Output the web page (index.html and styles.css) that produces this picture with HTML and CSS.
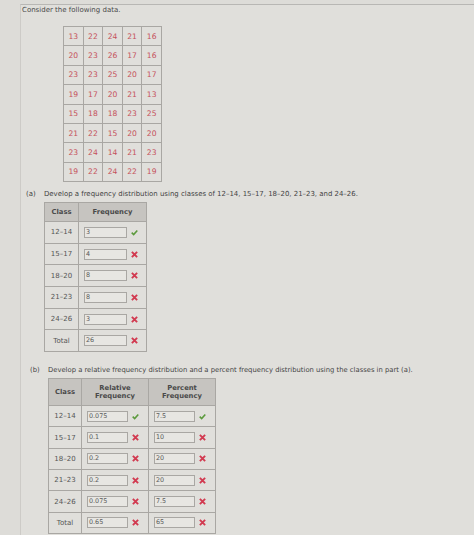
FILE: index.html
```html
<!DOCTYPE html>
<html>
<head>
<meta charset="utf-8">
<link rel="stylesheet" href="styles.css">
</head>
<body>
<div class="page">
  <p class="intro">Consider the following data.</p>
  <div class="data">
    <div>13</div><div>22</div><div>24</div><div>21</div><div>16</div>
    <div>20</div><div>23</div><div>26</div><div>17</div><div>16</div>
    <div>23</div><div>23</div><div>25</div><div>20</div><div>17</div>
    <div>19</div><div>17</div><div>20</div><div>21</div><div>13</div>
    <div>15</div><div>18</div><div>18</div><div>23</div><div>25</div>
    <div>21</div><div>22</div><div>15</div><div>20</div><div>20</div>
    <div>23</div><div>24</div><div>14</div><div>21</div><div>23</div>
    <div>19</div><div>22</div><div>24</div><div>22</div><div>19</div>
  </div>

  <div class="part part-a">
    <p class="question"><span class="lbl">(a)</span><span>Develop a frequency distribution using classes of 12–14, 15–17, 18–20, 21–23, and 24–26.</span></p>
    <div class="grid grid-a">
      <div class="hd">Class</div><div class="hd">Frequency</div>
      <div class="cls">12–14</div><div class="ans"><span class="box">3</span><svg class="ic" viewBox="0 0 10 8"><path d="M1 4.2 L3.8 7 L9 1" fill="none" stroke="#5b9a3c" stroke-width="2.2"/></svg></div>
      <div class="cls">15–17</div><div class="ans"><span class="box">4</span><svg class="ic" viewBox="0 0 8 8"><path d="M1 1 L7 7 M7 1 L1 7" stroke="#d23a50" stroke-width="2.2"/></svg></div>
      <div class="cls">18–20</div><div class="ans"><span class="box">8</span><svg class="ic" viewBox="0 0 8 8"><path d="M1 1 L7 7 M7 1 L1 7" stroke="#d23a50" stroke-width="2.2"/></svg></div>
      <div class="cls">21–23</div><div class="ans"><span class="box">8</span><svg class="ic" viewBox="0 0 8 8"><path d="M1 1 L7 7 M7 1 L1 7" stroke="#d23a50" stroke-width="2.2"/></svg></div>
      <div class="cls">24–26</div><div class="ans"><span class="box">3</span><svg class="ic" viewBox="0 0 8 8"><path d="M1 1 L7 7 M7 1 L1 7" stroke="#d23a50" stroke-width="2.2"/></svg></div>
      <div class="cls">Total</div><div class="ans"><span class="box">26</span><svg class="ic" viewBox="0 0 8 8"><path d="M1 1 L7 7 M7 1 L1 7" stroke="#d23a50" stroke-width="2.2"/></svg></div>
    </div>
  </div>

  <div class="part part-b">
    <p class="question"><span class="lbl">(b)</span><span>Develop a relative frequency distribution and a percent frequency distribution using the classes in part (a).</span></p>
    <div class="grid grid-b">
      <div class="hd">Class</div><div class="hd">Relative<br>Frequency</div><div class="hd">Percent<br>Frequency</div>
      <div class="cls">12–14</div>
      <div class="ans"><span class="box">0.075</span><svg class="ic" viewBox="0 0 10 8"><path d="M1 4.2 L3.8 7 L9 1" fill="none" stroke="#5b9a3c" stroke-width="2.2"/></svg></div>
      <div class="ans"><span class="box">7.5</span><svg class="ic" viewBox="0 0 10 8"><path d="M1 4.2 L3.8 7 L9 1" fill="none" stroke="#5b9a3c" stroke-width="2.2"/></svg></div>
      <div class="cls">15–17</div>
      <div class="ans"><span class="box">0.1</span><svg class="ic" viewBox="0 0 8 8"><path d="M1 1 L7 7 M7 1 L1 7" stroke="#d23a50" stroke-width="2.2"/></svg></div>
      <div class="ans"><span class="box">10</span><svg class="ic" viewBox="0 0 8 8"><path d="M1 1 L7 7 M7 1 L1 7" stroke="#d23a50" stroke-width="2.2"/></svg></div>
      <div class="cls">18–20</div>
      <div class="ans"><span class="box">0.2</span><svg class="ic" viewBox="0 0 8 8"><path d="M1 1 L7 7 M7 1 L1 7" stroke="#d23a50" stroke-width="2.2"/></svg></div>
      <div class="ans"><span class="box">20</span><svg class="ic" viewBox="0 0 8 8"><path d="M1 1 L7 7 M7 1 L1 7" stroke="#d23a50" stroke-width="2.2"/></svg></div>
      <div class="cls">21–23</div>
      <div class="ans"><span class="box">0.2</span><svg class="ic" viewBox="0 0 8 8"><path d="M1 1 L7 7 M7 1 L1 7" stroke="#d23a50" stroke-width="2.2"/></svg></div>
      <div class="ans"><span class="box">20</span><svg class="ic" viewBox="0 0 8 8"><path d="M1 1 L7 7 M7 1 L1 7" stroke="#d23a50" stroke-width="2.2"/></svg></div>
      <div class="cls">24–26</div>
      <div class="ans"><span class="box">0.075</span><svg class="ic" viewBox="0 0 8 8"><path d="M1 1 L7 7 M7 1 L1 7" stroke="#d23a50" stroke-width="2.2"/></svg></div>
      <div class="ans"><span class="box">7.5</span><svg class="ic" viewBox="0 0 8 8"><path d="M1 1 L7 7 M7 1 L1 7" stroke="#d23a50" stroke-width="2.2"/></svg></div>
      <div class="cls">Total</div>
      <div class="ans"><span class="box">0.65</span><svg class="ic" viewBox="0 0 8 8"><path d="M1 1 L7 7 M7 1 L1 7" stroke="#d23a50" stroke-width="2.2"/></svg></div>
      <div class="ans"><span class="box">65</span><svg class="ic" viewBox="0 0 8 8"><path d="M1 1 L7 7 M7 1 L1 7" stroke="#d23a50" stroke-width="2.2"/></svg></div>
    </div>
  </div>
</div>
</body>
</html>
```

FILE: styles.css
```css
html, body {
  margin: 0;
  padding: 0;
}
body {
  background: #dddcd8;
  font-family: "DejaVu Sans", Verdana, sans-serif;
  color: #444;
  width: 474px;
  height: 535px;
  overflow: hidden;
}
.page {
  margin-top: 4px;
  margin-left: 20px;
  border-top: 1px solid #b8b7b4;
  border-left: 1px solid #cdcbc7;
  padding-left: 1px;
  height: 530px;
  background: #e0dfdb;
}
.intro {
  margin: 0;
  padding-top: 1px;
  font-size: 7px;
  line-height: 8px;
  color: #4a4a4a;
}
.data {
  margin-top: 12px;
  margin-left: 41px;
  display: grid;
  grid-template-columns: repeat(5, 18.6px);
  grid-auto-rows: 18.4px;
  gap: 1px;
  padding: 1px;
  width: max-content;
  background: #a9a7a3;
}
.data div {
  background: #e0dfdb;
  color: #c5505a;
  font-size: 7.6px;
  display: flex;
  align-items: center;
  justify-content: center;
}
.question {
  margin: 0;
  display: flex;
  font-size: 6.95px;
  line-height: 8px;
  color: #444;
}
.part-b .question {
  font-size: 6.8px;
}
.lbl {
  width: 18px;
  flex: none;
}
.part-a {
  margin-left: 4px;
  margin-top: 8px;
}
.part-b {
  margin-left: 8px;
  margin-top: 14px;
}
.grid {
  display: grid;
  gap: 1px;
  padding: 1px;
  width: max-content;
  background: #a9a7a3;
  margin-left: 18px;
  margin-top: 4px;
}
.grid-a {
  grid-template-columns: 33px 67px;
  grid-template-rows: 18px repeat(6, 20.66px);
}
.grid-b {
  grid-template-columns: 32px 66px 66px;
  grid-template-rows: 26px repeat(6, 20.33px);
}
.grid > div {
  background: #e0dfdb;
  display: flex;
  align-items: center;
}
.grid > .hd {
  background: #c6c4c0;
  justify-content: center;
  text-align: center;
  font-weight: bold;
  font-size: 6.8px;
  line-height: 8.5px;
  color: #4a4a4a;
}
.grid > .cls {
  justify-content: center;
  font-size: 7px;
  color: #555;
}
.grid > .ans {
  padding-left: 5px;
  gap: 4px;
}
.box {
  box-sizing: border-box;
  width: 43px;
  height: 11px;
  border: 1px solid #a9a7a3;
  background: #e7e6e2;
  font-size: 6.4px;
  line-height: 9px;
  padding-left: 1px;
  color: #5a5a5a;
}
.grid-b .box {
  width: 41px;
}
.ic {
  width: 7px;
  height: 7px;
}
```
